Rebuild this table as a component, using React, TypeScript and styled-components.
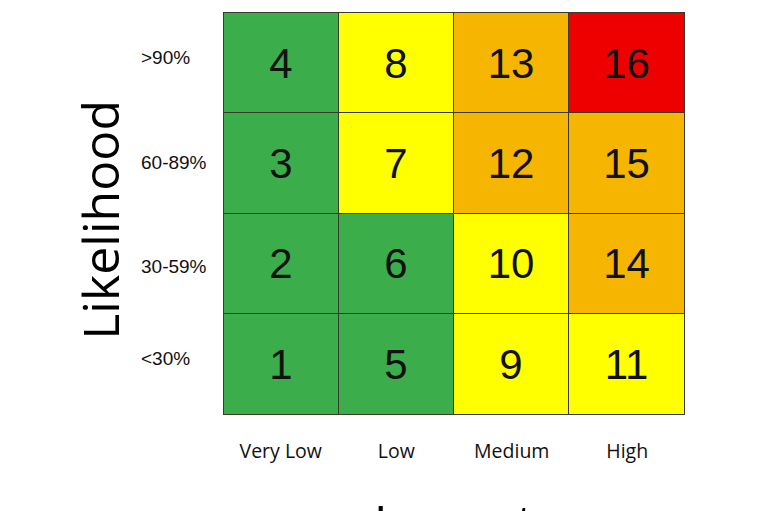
import React from "react";
import styled, { createGlobalStyle } from "styled-components";

const Global = createGlobalStyle`
  html, body { margin: 0; padding: 0; background: #ffffff; }
  body { width: 768px; height: 511px; overflow: hidden; }
`;

type Level = "green" | "yellow" | "orange" | "red";

const COLORS: Record<Level, string> = {
  green: "#3bad4b",
  yellow: "#ffff00",
  orange: "#f6b500",
  red: "#ee0000",
};

const Page = styled.div`
  display: grid;
  grid-template-columns: 141px 82px 462px;
  grid-template-rows: 403px 80px auto;
  padding-top: 12px;
  width: 768px;
  height: 511px;
  box-sizing: border-box;
  overflow: hidden;
`;

const YTitleCell = styled.div`
  display: flex;
  align-items: center;
  justify-content: flex-end;
  padding-right: 16px;
  padding-top: 12px;
`;

const AxisTitle = styled.div<{ $vertical?: boolean }>`
  font-family: "Open Sans", "Liberation Sans", sans-serif;
  font-size: 50px;
  line-height: 1;
  color: #000;
  white-space: nowrap;
  ${(p) =>
    p.$vertical
      ? `writing-mode: vertical-rl; transform: rotate(180deg);`
      : ``}
`;

const RowLabels = styled.div`
  display: grid;
  grid-template-rows: repeat(4, 1fr);
`;

const RowLabel = styled.div<{ $shift: number }>`
  display: flex;
  align-items: center;
  font-family: "Liberation Sans", Arial, sans-serif;
  font-size: 19px;
  color: #111;
  transform: translateY(${(p) => p.$shift}px);
`;

const Matrix = styled.div`
  display: grid;
  grid-template-columns: repeat(4, 1fr);
  grid-template-rows: repeat(4, 1fr);
  border: 1px solid #3a3a2a;
`;

const Cell = styled.div<{ $level: Level }>`
  background: ${(p) => COLORS[p.$level]};
  border-right: 1px solid #3a3a2a;
  border-bottom: 1px solid #3a3a2a;
  &:nth-child(4n) { border-right: none; }
  &:nth-last-child(-n + 4) { border-bottom: none; }
  display: flex;
  align-items: center;
  justify-content: center;
  font-family: "Liberation Sans", Arial, sans-serif;
  font-size: 42px;
  color: #111;
  padding-top: 2px;
`;

const ColLabels = styled.div`
  grid-column: 3;
  display: grid;
  grid-template-columns: repeat(4, 1fr);
  align-items: center;
  padding-top: 12px;
  height: 46px;
`;

const ColLabel = styled.div`
  text-align: center;
  font-family: "Open Sans", "Liberation Sans", sans-serif;
  font-size: 19.5px;
  color: #111;
`;

const XTitleCell = styled.div`
  grid-column: 3;
  display: flex;
  justify-content: center;
  padding-top: 2px;
`;

const rows: { label: string; shift: number; cells: [number, Level][] }[] = [
  { label: ">90%", shift: -4, cells: [[4, "green"], [8, "yellow"], [13, "orange"], [16, "red"]] },
  { label: "60-89%", shift: 0, cells: [[3, "green"], [7, "yellow"], [12, "orange"], [15, "orange"]] },
  { label: "30-59%", shift: 3, cells: [[2, "green"], [6, "green"], [10, "yellow"], [14, "orange"]] },
  { label: "<30%", shift: -6, cells: [[1, "green"], [5, "green"], [9, "yellow"], [11, "yellow"]] },
];

const cols = ["Very Low", "Low", "Medium", "High"];

export default function App() {
  return (
    <>
      <Global />
      <Page>
        <YTitleCell>
          <AxisTitle $vertical>Likelihood</AxisTitle>
        </YTitleCell>
        <RowLabels>
          {rows.map((r) => (
            <RowLabel key={r.label} $shift={r.shift}>
              {r.label}
            </RowLabel>
          ))}
        </RowLabels>
        <Matrix>
          {rows.flatMap((r) =>
            r.cells.map(([n, lvl]) => (
              <Cell key={n} $level={lvl}>
                {n}
              </Cell>
            ))
          )}
        </Matrix>
        <ColLabels>
          {cols.map((c) => (
            <ColLabel key={c}>{c}</ColLabel>
          ))}
        </ColLabels>
        <XTitleCell>
          <AxisTitle>Impact</AxisTitle>
        </XTitleCell>
      </Page>
    </>
  );
}
